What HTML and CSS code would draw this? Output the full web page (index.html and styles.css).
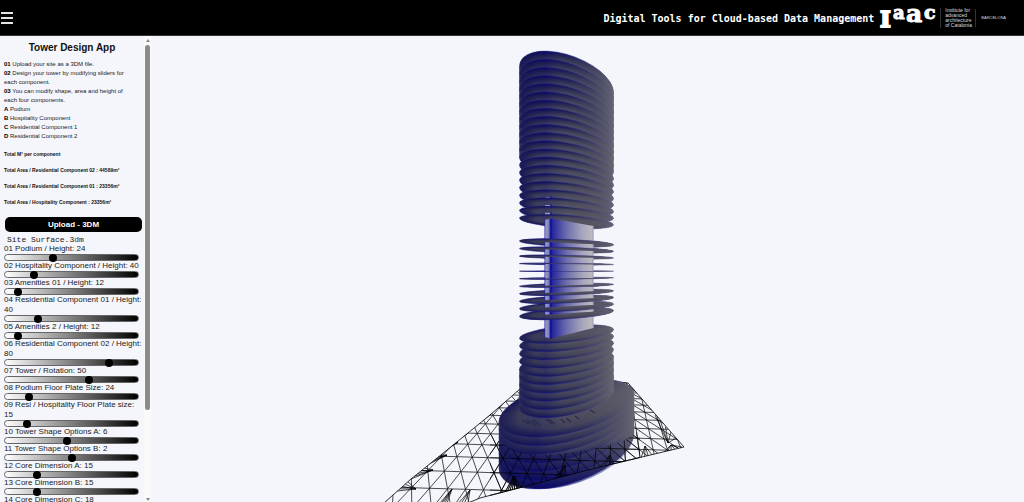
FILE: index.html
```html
<!DOCTYPE html>
<html lang="en">
<head>
<meta charset="utf-8">
<title>Tower Design App</title>
<link rel="stylesheet" href="styles.css">
</head>
<body>
<header class="topbar">
  <button class="menu" type="button" aria-label="Menu"><span></span><span></span><span></span></button>
  <div class="brand">
    <span class="brand-title">Digital Tools for Cloud-based Data Management</span>
    <svg class="logo" width="60" height="34" viewBox="-2 -8 60 34" role="img" aria-label="Iaac">
      <g fill="#fff" stroke="#fff" font-family="DejaVu Serif, serif" font-weight="bold">
        <text x="0" y="18" font-size="23" stroke-width="2">I</text>
        <text x="13" y="10" font-size="18" stroke-width="1">a</text>
        <text x="26" y="13" font-size="25" stroke-width="1">a</text>
        <text x="44" y="10" font-size="19" stroke-width="1">c</text>
      </g>
    </svg>
    <span class="institute">Institute for<br>advanced<br>architecture<br>of Catalonia</span>
    <span class="city">BARCELONA</span>
  </div>
</header>
<div class="workspace">
  <aside class="sidebar">
    <div class="panel">
      <h1>Tower Design App</h1>
      <div class="intro">
        <p><b>01</b> Upload your site as a 3DM file.</p>
        <p><b>02</b> Design your tower by modifying sliders for each component.</p>
        <p><b>03</b> You can modify shape, area and height of each four components.</p>
        <p><b>A</b> Podium</p>
        <p><b>B</b> Hospitality Component</p>
        <p><b>C</b> Residential Component 1</p>
        <p><b>D</b> Residential Component 2</p>
      </div>
      <div class="stats">
        <p>Total M² per component</p>
        <p>Total Area / Residential Component 02 : 44589m²</p>
        <p>Total Area / Residential Component 01 : 23356m²</p>
        <p>Total Area / Hospitality Component : 23356m²</p>
      </div>
      <button class="upload" type="button">Upload - 3DM</button>
      <p class="filename">Site Surface.3dm</p>
      <form class="controls">
        <label for="s1">01 Podium / Height: 24</label><input id="s1" type="range" value="35">
        <label for="s2">02 Hospitality Component / Height: 40</label><input id="s2" type="range" value="20">
        <label for="s3">03 Amenities 01 / Height: 12</label><input id="s3" type="range" value="7">
        <label for="s4">04 Residential Component 01 / Height: 40</label><input id="s4" type="range" value="23">
        <label for="s5">05 Amenities 2 / Height: 12</label><input id="s5" type="range" value="7">
        <label for="s6">06 Residential Component 02 / Height: 80</label><input id="s6" type="range" value="80">
        <label for="s7">07 Tower / Rotation: 50</label><input id="s7" type="range" value="64">
        <label for="s8">08 Podium Floor Plate Size: 24</label><input id="s8" type="range" value="16">
        <label for="s9">09 Resi / Hospitality Floor Plate size: 15</label><input id="s9" type="range" value="14">
        <label for="s10">10 Tower Shape Options A: 6</label><input id="s10" type="range" value="46">
        <label for="s11">11 Tower Shape Options B: 2</label><input id="s11" type="range" value="50">
        <label for="s12">12 Core Dimension A: 15</label><input id="s12" type="range" value="22">
        <label for="s13">13 Core Dimension B: 15</label><input id="s13" type="range" value="22">
        <label for="s14">14 Core Dimension C: 18</label><input id="s14" type="range" value="26">
      </form>
    </div>
    <div class="scroll" aria-hidden="true"><i class="up"></i><i class="thumb"></i><i class="down"></i></div>
  </aside>
  <main class="viewer">
    <svg id="scene" viewBox="152 36 872 466" role="img" aria-label="Tower model">
      <defs>
        <radialGradient id="face" gradientUnits="userSpaceOnUse" cx="0" cy="0" r="1">
          <stop offset="0" stop-color="#5c5c62"/><stop offset=".64" stop-color="#48485a"/><stop offset=".84" stop-color="#26264f"/><stop offset="1" stop-color="#08085c"/>
        </radialGradient>
        <radialGradient id="deep" gradientUnits="userSpaceOnUse" cx="0" cy="0" r="1">
          <stop offset="0" stop-color="#5c5c62"/><stop offset=".72" stop-color="#404056"/><stop offset="1" stop-color="#121254"/>
        </radialGradient>
        <linearGradient id="side" gradientUnits="userSpaceOnUse" x1="-1" y1="0" x2="1" y2="0">
          <stop offset="0" stop-color="#40405c" stop-opacity=".3"/><stop offset=".15" stop-color="#101060" stop-opacity=".12"/><stop offset=".27" stop-color="#060668" stop-opacity=".25"/><stop offset=".5" stop-color="#484860" stop-opacity=".2"/><stop offset="1" stop-color="#6e6e72" stop-opacity=".9"/>
        </linearGradient>
        <linearGradient id="rim" gradientUnits="userSpaceOnUse" x1="-1" y1="0" x2="1" y2="0">
          <stop offset="0" stop-color="#33336c"/><stop offset=".3" stop-color="#1c1c9c"/><stop offset=".6" stop-color="#484890"/><stop offset="1" stop-color="#747488"/>
        </linearGradient>
        <linearGradient id="slab" x1="0" x2="1" y1="0" y2="0">
          <stop offset="0" stop-color="#30305a"/><stop offset=".3" stop-color="#14145c"/><stop offset="1" stop-color="#68686e"/>
        </linearGradient>
        <linearGradient id="coreFront" x1="0" x2="1" y1="0" y2="0">
          <stop offset="0" stop-color="#20209a"/><stop offset=".35" stop-color="#6a6aae"/><stop offset=".75" stop-color="#a8a8bc"/><stop offset="1" stop-color="#bdbdc0"/>
        </linearGradient>
        <linearGradient id="coreSide" x1="0" x2="1" y1="0" y2="0">
          <stop offset="0" stop-color="#2424a4"/><stop offset=".2" stop-color="#9c9cc4"/><stop offset=".6" stop-color="#8484bc"/><stop offset="1" stop-color="#10109c"/>
        </linearGradient>
        <linearGradient id="shade" x1="0" x2="0" y1="0" y2="1">
          <stop offset="0" stop-color="#06066c" stop-opacity="0"/><stop offset="1" stop-color="#04046c" stop-opacity=".6"/>
        </linearGradient>
        <clipPath id="site"><path d="M384 503 L411 479 L452 446 L490 415 L520 389 L560 376 L614 381 L628 383 L684 447 L600 467 L480 498 L468 503 Z"/></clipPath>
        <clipPath id="front"><path d="M490 434 L499 441 Q512 453 538 455 Q592 453 625 440 L640 430 V510 H490 Z"/></clipPath>
      </defs>
    </svg>
  </main>
</div>
<script src="scene.js"></script>
</body>
</html>
```
FILE: styles.css
```css
* { box-sizing: border-box; }
body {
  margin: 0;
  height: 100vh;
  display: flex;
  flex-direction: column;
  overflow: hidden;
  background: #f4f6fb;
  color: #111;
  font-family: "Liberation Sans", Arial, sans-serif;
}
h1, p { margin: 0; }
.topbar {
  display: flex;
  flex: none;
  align-items: center;
  justify-content: space-between;
  padding: 1px 18px 0 1px;
  background: #000;
  border-bottom: 1px solid #333;
  color: #fff;
}
.menu {
  display: flex;
  flex-direction: column;
  gap: 3px;
  width: 12px;
  padding: 0;
  border: 0;
  background: none;
}
.menu span { height: 2px; background: #e4e4e4; }
.brand { display: flex; align-items: center; gap: 4px; }
.brand-title { font: bold 10px "DejaVu Sans Mono", monospace; white-space: nowrap; }
.logo { display: block; }
.institute {
  width: 35px;
  padding-left: 4px;
  margin-left: -2px;
  border-left: 1px solid #333;
  font-size: 5px;
  line-height: 5px;
  color: #ddd;
  white-space: nowrap;
}
.city {
  padding-left: 5px;
  margin-left: -4px;
  border-left: 1px solid #333;
  font-size: 4px;
  line-height: 18px;
  color: #ddd;
}
.workspace { display: flex; flex: 1; min-height: 0; }
.sidebar { display: flex; flex: none; width: 152px; min-height: 0; }
.panel {
  flex: 1;
  padding: 6px 0 0 4px;
  overflow-y: auto;
  scrollbar-width: none;
}
.panel h1 { padding-right: 4px; font-size: 10px; line-height: 12px; text-align: center; }
.intro {
  margin-top: 6px;
  padding-right: 12px;
  font-size: 6px;
  line-height: 9px;
  color: #222;
}
.intro b { color: #000; }
.stats {
  display: flex;
  flex-direction: column;
  gap: 10px;
  margin: 10px 0 12px;
  font-size: 5px;
  font-weight: bold;
  line-height: 6px;
  white-space: nowrap;
}
.upload {
  display: block;
  width: calc(100% - 3px);
  height: 15px;
  margin-left: 1px;
  padding: 0;
  border: 0;
  border-radius: 5px;
  background: #000;
  color: #fff;
  font: bold 8px "Liberation Sans", Arial, sans-serif;
}
.filename { margin: 4px 0 0 3px; font: 8px/8px "Liberation Mono", monospace; color: #222; }
.controls { padding-bottom: 8px; }
.controls label { display: block; font-size: 8px; line-height: 10px; color: #222; }
.controls input {
  display: block;
  width: calc(100% - 5px);
  height: 7px;
  margin: 0;
  appearance: none;
  border: 1px solid #666;
  border-radius: 4px;
  background: linear-gradient(90deg, #fff, #000);
}
.controls input::-webkit-slider-thumb {
  appearance: none;
  width: 8px;
  height: 8px;
  border-radius: 50%;
  background: #000;
}
.scroll {
  display: flex;
  flex-direction: column;
  align-items: center;
  width: 7px;
  margin-right: 1px;
  padding: 3px 0 1px;
  background: #fafafc;
}
.scroll .up { border: 2px solid transparent; border-bottom: 3px solid #888; border-top: 0; }
.scroll .thumb { width: 5px; height: 79%; margin-top: 3px; border-radius: 3px; background: #8b8b8b; }
.scroll .down { margin-top: auto; border: 2px solid transparent; border-top: 3px solid #888; border-bottom: 0; }
.viewer { flex: 1; min-width: 0; }
.viewer svg { display: block; width: 100%; height: 100%; }
```
FILE: scene.js
```js
const scene = document.getElementById('scene');
const HORIZON = 271;
const CX = 566.5;
let out = '';

// Matrix that puts a unit circle on the floor plate at height y.
function plate(y, a) {
  const d = (y - HORIZON) * a / 47;
  return `matrix(${a} ${-d * 0.068} 0 ${Math.max(Math.abs(d) * 0.132, 0.4)} ${CX} ${y})`;
}
function disc(y, a, fill) {
  return `<g transform="${plate(y, a)}"><circle r="1" fill="url(#${fill})"/>` +
    `<circle r="1" fill="url(#side)" stroke="url(#rim)" stroke-width=".5" vector-effect="non-scaling-stroke"/></g>`;
}
// The edge of a slab, a short upright band behind its plate.
function band(y, a, h) {
  const m = (y - HORIZON) * a / 47 * 0.068;
  return `<path d="M${CX - a - 0.2} ${y + m}v${h}L${CX + a + 0.2} ${y - m + h}v${-h}Z" fill="url(#slab)"/>`;
}
function nearHalf(y, a) {
  const sweep = y < HORIZON ? 1 : 0;
  return `<g transform="${plate(y, a)}"><path d="M-1 0A1 1 0 0 ${sweep} 1 0Z" fill="url(#deep)"/>` +
    `<path d="M-1 0A1 1 0 0 ${sweep} 1 0" fill="url(#side)" stroke="url(#rim)" stroke-width=".5" vector-effect="non-scaling-stroke"/></g>`;
}

// Triangulated site surface in perspective.
function rowPoint(k, j) {
  const y = HORIZON + 1 / (0.00459 + 0.0004 * k);
  const x = 515 + (y - HORIZON) * 0.0826 * (j - 5.75 + k * 0.48);
  return [x, y + (x - 450) * 0.03];
}
let mesh = '';
const seg = (p, q) => { mesh += `M${p[0].toFixed(1)} ${p[1].toFixed(1)}L${q[0].toFixed(1)} ${q[1].toFixed(1)}`; };
for (let k = -2; k < 15; k++) {
  for (let j = -12; j < 24; j++) {
    const p = rowPoint(k, j);
    seg(p, rowPoint(k, j + 1));
    seg(p, rowPoint(k + 1, j));
    seg(p, rowPoint(k + 1, j - 1));
  }
}
function fan(x, y, x1, y1, x2, y2, n) {
  for (let i = 0; i <= n; i++) seg([x, y], [x1 + (x2 - x1) * i / n, y1 + (y2 - y1) * i / n]);
}
fan(416, 489, 397, 491, 408, 482, 4);
fan(433, 470, 411, 479, 424, 468, 4);
fan(447, 455, 429, 464, 440, 455, 4);
fan(458, 442, 446, 450, 454, 444, 3);
fan(468, 433, 458, 440, 466, 434, 3);
fan(491, 414, 482, 421, 492, 413, 3);
fan(452, 489, 434, 510, 446, 506, 4);
fan(470, 490, 456, 506, 468, 503, 3);
fan(514, 476, 505, 492, 522, 488, 7);
fan(565, 465, 554, 479, 566, 476, 4);
fan(610, 455, 600, 467, 614, 464, 3);
fan(645, 446, 641, 458, 652, 455, 3);
fan(671, 445, 664, 452, 682, 447, 5);
fan(668, 443, 655, 415, 676, 438, 4);
fan(633, 391, 626, 383, 636, 391, 3);
const outline = 'M384 503L411 479L452 446L490 415L520 389M610 381L628 383L684 447L600 467L480 498L468 503';
const terrain = `<g clip-path="url(#site)"><path d="${mesh}" fill="none" stroke="#000" stroke-width=".7"/></g>`;

out += terrain + `<path d="${outline}" fill="none" stroke="#000" stroke-width=".8"/>`;

// Podium, seven plates drawn from the ground up.
for (let i = 6; i >= 0; i--) out += (i < 6 ? band(408 + i * 7.1, 67.5, 7) : '') + disc(408 + i * 7.1, 67.5, 'deep');
out += `<path d="M499 440Q512 453 538 455Q592 453 634 433V437C632 462 580 490 540 489Q499 482 499 460Z" fill="url(#shade)"/>`;
out += '<path d="M522 420l8 4M527 420l9 5M533 420l7 5M546 419l6 5M549 419l6 5M561 419l4 4M566 418l5 4M575 416l4 3M590 410l5 3" stroke="#2b2b4c" stroke-width="1.4"/>';
out += `<g clip-path="url(#front)">${terrain}<path d="${outline}" fill="none" stroke="#000" stroke-width=".8"/></g>`;

// Lower stack.
for (let i = 9; i >= 0; i--) out += (i > 3 && i < 9 ? band(334 + i * 7.2, 47, 7) : '') + disc(334 + i * 7.2, 47, 'deep');

// Upper stack, seen from below.
for (let i = 0; i <= 20; i++) out += (i > 0 && i < 13 ? band(79.5 + i * 7.1, 47, -7) : '') + disc(79.5 + i * 7.1, 47, 'face');
for (let i = 0; i < 3; i++) out += `<path d="M545 ${197.5 + i * 8}h5" stroke="#9c9cc4" stroke-width="${0.4 + i * 0.5}"/><path d="M551 ${196 + i * 8}v4" stroke="#1010b0"/>`;

// Amenity plates and the core passing through them.
const open = Array.from({ length: 11 }, (_, i) => 243 + i * 7.04);
open.forEach(y => { out += disc(y, 47, 'deep'); });
out += '<path d="M544.5 220L551 218.5V338.5L544.5 337Z" fill="url(#coreSide)"/>';
out += '<path d="M551 218.5L593.5 226V328L551 338.5Z" fill="url(#coreFront)"/>';
out += '<path d="M551 219V339" stroke="#10109c" stroke-width="1.4"/><path d="M593 227V327" stroke="#8888bc" stroke-width=".6"/>';
open.forEach(y => { out += nearHalf(y, 47); });

scene.insertAdjacentHTML('beforeend', out);
```
